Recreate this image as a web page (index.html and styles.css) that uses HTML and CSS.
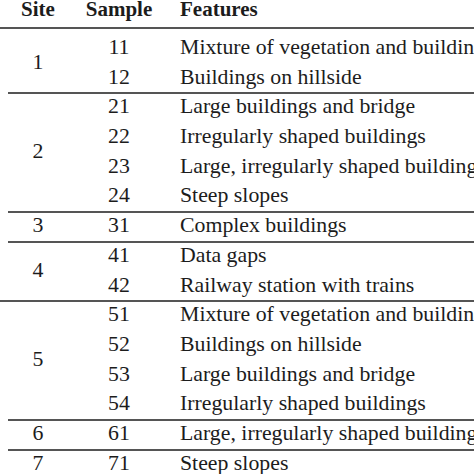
FILE: index.html
```html
<!DOCTYPE html>
<html>
<head>
<meta charset="utf-8">
<link rel="stylesheet" href="styles.css">
</head>
<body>
<div class="table">
  <div class="head">
    <div class="c-site">Site</div>
    <div class="c-sample">Sample</div>
    <div class="c-feat">Features</div>
  </div>
  <div class="section first">
    <div class="site">1</div>
    <div class="rows">
      <div class="row"><div class="c-sample">11</div><div class="c-feat">Mixture of vegetation and buildings</div></div>
      <div class="row"><div class="c-sample">12</div><div class="c-feat">Buildings on hillside</div></div>
    </div>
  </div>
  <div class="section">
    <div class="site">2</div>
    <div class="rows">
      <div class="row"><div class="c-sample">21</div><div class="c-feat">Large buildings and bridge</div></div>
      <div class="row"><div class="c-sample">22</div><div class="c-feat">Irregularly shaped buildings</div></div>
      <div class="row"><div class="c-sample">23</div><div class="c-feat">Large, irregularly shaped buildings</div></div>
      <div class="row"><div class="c-sample">24</div><div class="c-feat">Steep slopes</div></div>
    </div>
  </div>
  <div class="section">
    <div class="site">3</div>
    <div class="rows">
      <div class="row"><div class="c-sample">31</div><div class="c-feat">Complex buildings</div></div>
    </div>
  </div>
  <div class="section">
    <div class="site">4</div>
    <div class="rows">
      <div class="row"><div class="c-sample">41</div><div class="c-feat">Data gaps</div></div>
      <div class="row"><div class="c-sample">42</div><div class="c-feat">Railway station with trains</div></div>
    </div>
  </div>
  <div class="section full">
    <div class="site">5</div>
    <div class="rows">
      <div class="row"><div class="c-sample">51</div><div class="c-feat">Mixture of vegetation and buildings</div></div>
      <div class="row"><div class="c-sample">52</div><div class="c-feat">Buildings on hillside</div></div>
      <div class="row"><div class="c-sample">53</div><div class="c-feat">Large buildings and bridge</div></div>
      <div class="row"><div class="c-sample">54</div><div class="c-feat">Irregularly shaped buildings</div></div>
    </div>
  </div>
  <div class="section">
    <div class="site">6</div>
    <div class="rows">
      <div class="row"><div class="c-sample">61</div><div class="c-feat">Large, irregularly shaped buildings</div></div>
    </div>
  </div>
  <div class="section">
    <div class="site">7</div>
    <div class="rows">
      <div class="row"><div class="c-sample">71</div><div class="c-feat">Steep slopes</div></div>
    </div>
  </div>
</div>
</body>
</html>
```

FILE: styles.css
```css
html, body {
  margin: 0;
  padding: 0;
  background: #ffffff;
  overflow: hidden;
}
body {
  width: 474px;
  height: 474px;
  font-family: "Liberation Serif", "Times New Roman", serif;
  font-size: 21.8px;
  color: #1c1c1c;
  white-space: nowrap;
}
.table {
  display: flex;
  flex-direction: column;
}
.head {
  display: flex;
  height: 27px;
  line-height: 18px;
  font-weight: bold;
  font-size: 21px;
  padding-left: 8px;
  border-bottom: 2px solid #555555;
  margin-bottom: 4px;
}
.c-site {
  width: 60px;
  text-align: center;
}
.c-sample {
  width: 102px;
  flex: none;
  text-align: center;
}
.c-feat {
  padding-left: 10px;
}
.section {
  display: flex;
  margin-left: 8px;
  box-shadow: inset 0 2px 0 #555555;
}
.section.first {
  box-shadow: none;
}
.section.full {
  margin-left: 0;
  padding-left: 8px;
}
.site {
  width: 60px;
  flex: none;
  display: flex;
  align-items: center;
  justify-content: center;
}
.rows {
  display: flex;
  flex-direction: column;
}
.row {
  display: flex;
  height: 29.7px;
  line-height: 29.7px;
}
```
